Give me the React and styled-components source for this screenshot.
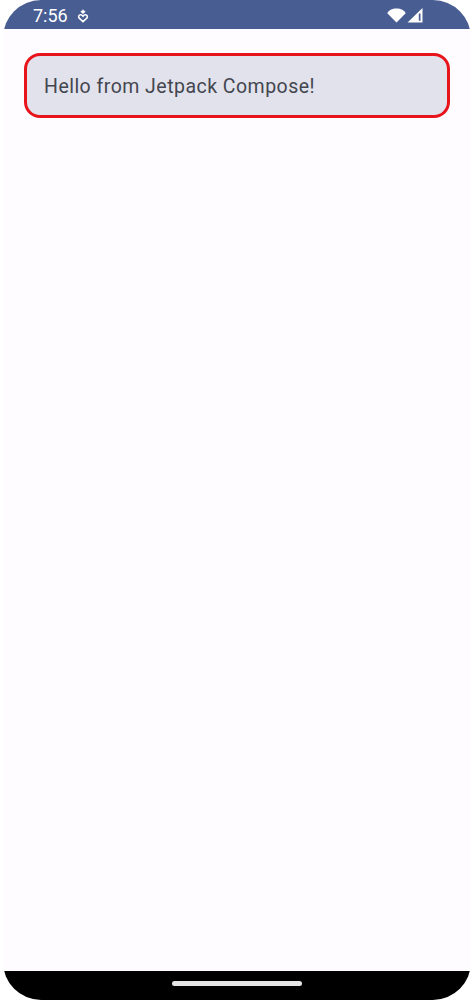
import React from "react"
import styled, { createGlobalStyle } from "styled-components"

const GlobalStyle = createGlobalStyle`
  html, body {
    margin: 0;
    padding: 0;
    background: #ffffff;
  }
`

const Phone = styled.div`
  display: flex;
  flex-direction: column;
  height: 1000px;
  margin: 0 3px;
  border-radius: 38px;
  overflow: hidden;
  background: #fefcfe;
  font-family: Roboto, "Liberation Sans", sans-serif;
`

const StatusBar = styled.header`
  display: flex;
  align-items: center;
  justify-content: space-between;
  height: 29px;
  padding: 2px 48px 0 30px;
  box-sizing: border-box;
  background: #485d92;
  color: #ffffff;
`

const StatusLeft = styled.div`
  display: flex;
  align-items: center;
  gap: 9px;
`

const StatusRight = styled.div`
  display: flex;
  align-items: center;
  gap: 1px;
`

const Clock = styled.span`
  font-size: 18px;
`

const Content = styled.main`
  flex: 1;
  padding: 24px 21px 0;
`

const Card = styled.div`
  display: flex;
  align-items: center;
  height: 65px;
  padding: 2px 17px 0;
  box-sizing: border-box;
  border: 3px solid #e8141c;
  border-radius: 16px;
  background: #e1e2ec;
  color: #44464f;
  font-size: 19.5px;
  letter-spacing: 0.47px;
`

const NavBar = styled.footer`
  display: flex;
  align-items: center;
  justify-content: center;
  height: 29px;
  padding-bottom: 5px;
  box-sizing: border-box;
  background: #000000;
`

const NavPill = styled.div`
  width: 130px;
  height: 5px;
  border-radius: 3px;
  background: #e6e6e6;
`

const LocationIcon = () => (
  <svg width="12" height="14" viewBox="0 0 12 14" fill="none" stroke="#fff" strokeWidth="1.6">
    <path d="M6 .8v2.200M4 2.200 6 4l2-1.800" />
    <path d="M6 12.600 2.200 9.200C.9 7.800 2 5.600 3.800 5.800 4.900 5.900 5.500 6.600 6 7.200c.5-.6 1.100-1.300 2.200-1.400 1.800-.2 2.900 2 1.600 3.400Z" />
  </svg>
)

const WifiIcon = () => (
  <svg width="19" height="15" viewBox="0 0 19 15" fill="#fff">
    <path d="M.3 5.200C1.500 2.300 5.200.4 9.500.4s8 1.900 9.200 4.800L9.500 14.600Z" />
  </svg>
)

const SignalIcon = () => (
  <svg width="16" height="15" viewBox="0 0 16 15" fill="#fff">
    <path fillRule="evenodd" d="M15.500 0v14.500H.5ZM13.500 5.500h-1.700v7.300h1.700Z" />
  </svg>
)

const App = () => {
  return (
    <>
      <GlobalStyle />
      <Phone>
        <StatusBar>
          <StatusLeft>
            <Clock>7:56</Clock>
            <LocationIcon />
          </StatusLeft>
          <StatusRight>
            <WifiIcon />
            <SignalIcon />
          </StatusRight>
        </StatusBar>
        <Content>
          <Card>Hello from Jetpack Compose!</Card>
        </Content>
        <NavBar>
          <NavPill />
        </NavBar>
      </Phone>
    </>
  )
}

export default App
